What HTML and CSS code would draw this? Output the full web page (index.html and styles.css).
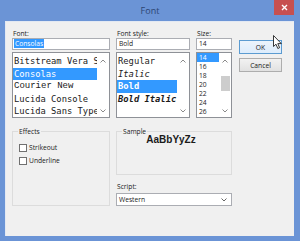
FILE: index.html
```html
<!DOCTYPE html>
<html lang="en">
<head>
    <meta charset="UTF-8">
    <title>Font</title>
    <link rel="stylesheet" href="styles.css">
</head>
<body>
    <div class="window">
        <div class="titlebar">
            <span></span>
            <span class="title">Font</span>
            <span class="close">
                <svg width="7" height="7" viewBox="0 0 7 7"><path d="M1 1L6 6M6 1L1 6" stroke="#fff" stroke-width="1.4"/></svg>
            </span>
        </div>

        <div class="client">
            <div class="top">
                <!-- Font name -->
                <div class="col">
                    <label class="lbl">Font:</label>
                    <div class="edit"><span class="sel">Consolas</span></div>
                    <div class="list">
                        <ul class="items mono">
                            <li class="f-vera">Bitstream Vera Sans Mono</li>
                            <li class="active">Consolas</li>
                            <li class="f-courier">Courier New</li>
                            <li>Lucida Console</li>
                            <li>Lucida Sans Typewriter</li>
                        </ul>
                        <div class="vscroll">
                            <svg class="arrow" width="6" height="4" viewBox="0 0 6 4"><path d="M0.5 3.5L3 1L5.5 3.5" fill="none" stroke="#8a8a8a"/></svg>
                            <svg class="arrow" width="6" height="4" viewBox="0 0 6 4"><path d="M0.5 0.5L3 3L5.5 0.5" fill="none" stroke="#8a8a8a"/></svg>
                        </div>
                    </div>
                </div>

                <!-- Font style -->
                <div class="col">
                    <label class="lbl">Font style:</label>
                    <div class="edit">Bold</div>
                    <div class="list">
                        <ul class="items mono">
                            <li>Regular</li>
                            <li class="it">Italic</li>
                            <li class="active bd">Bold</li>
                            <li class="bd it">Bold Italic</li>
                        </ul>
                        <div class="vscroll">
                            <svg class="arrow" width="6" height="4" viewBox="0 0 6 4"><path d="M0.5 3.5L3 1L5.5 3.5" fill="none" stroke="#8a8a8a"/></svg>
                            <svg class="arrow" width="6" height="4" viewBox="0 0 6 4"><path d="M0.5 0.5L3 3L5.5 0.5" fill="none" stroke="#8a8a8a"/></svg>
                        </div>
                    </div>
                </div>

                <!-- Size -->
                <div class="col">
                    <label class="lbl">Size:</label>
                    <div class="edit">14</div>
                    <div class="list">
                        <ul class="items sizes">
                            <li class="active">14</li>
                            <li>16</li>
                            <li>18</li>
                            <li>20</li>
                            <li>22</li>
                            <li>24</li>
                            <li>26</li>
                        </ul>
                        <div class="vscroll">
                            <svg class="arrow" width="6" height="4" viewBox="0 0 6 4"><path d="M0.5 3.5L3 1L5.5 3.5" fill="none" stroke="#8a8a8a"/></svg>
                            <div class="thumb"></div>
                            <svg class="arrow" width="6" height="4" viewBox="0 0 6 4"><path d="M0.5 0.5L3 3L5.5 0.5" fill="none" stroke="#8a8a8a"/></svg>
                        </div>
                    </div>
                </div>

                <div class="buttons">
                    <button class="btn default">OK</button>
                    <button class="btn">Cancel</button>
                    <svg class="cursor" width="10" height="15" viewBox="0 0 10 15">
                        <path d="M0.5 0.5L0.5 11.5L3 9.2L4.8 13.5L6.6 12.7L4.8 8.6L8.3 8.6Z" fill="#fff" stroke="#222" stroke-width="0.9" stroke-linejoin="round"/>
                    </svg>
                </div>
            </div>

            <div class="bottom">
                <fieldset class="group effects">
                    <legend>Effects</legend>
                    <div class="check"><span class="box"></span>Strikeout</div>
                    <div class="check"><span class="box"></span>Underline</div>
                </fieldset>

                <div class="col">
                    <fieldset class="group sample">
                        <legend>Sample</legend>
                        <div class="sample-text">AaBbYyZz</div>
                    </fieldset>
                    <label class="lbl script-lbl">Script:</label>
                    <div class="combo">
                        <span>Western</span>
                        <svg width="6" height="4" viewBox="0 0 6 4"><path d="M0.5 0.5L3 3L5.5 0.5" fill="none" stroke="#666"/></svg>
                    </div>
                </div>
            </div>
        </div>
    </div>
</body>
</html>
```

FILE: styles.css
```css
/* Colours */
:root {
    --frame: #6b94d6;
    --face: #f0f0f0;
    --edit-border: #abadb3;
    --list-border: #8e9197;
    --group-border: #dcdcdc;
    --highlight: #3399ff;
    --text: #1a1a1a;
}

/* General */
body {
    margin: 0;
    font-family: "Open Sans", "Liberation Sans", sans-serif;
    font-size: 6.7px;
    color: var(--text);
}
ul {
    margin: 0;
    padding: 0;
    list-style: none;
}

/* Window frame */
.window {
    width: 300px;
    height: 241px;
    box-sizing: border-box;
    background: var(--frame);
    padding: 0 6px 5px 5px;
    display: flex;
    flex-direction: column;
}
.titlebar {
    height: 21px;
    margin: 0 -6px 0 -5px;
    display: grid;
    grid-template-columns: 1fr auto 1fr;
    align-items: start;
}
.title {
    font-size: 9px;
    line-height: 22px;
    color: #2b4573;
}
.close {
    justify-self: end;
    margin-right: 6px;
    width: 20px;
    height: 15px;
    background: #c75050;
    display: flex;
    align-items: center;
    justify-content: center;
}
.client {
    flex: 1;
    background: var(--face);
    padding: 8px 0 0 7px;
    box-shadow: inset 1px 1px 0 #e3e9f3;
}

/* Top area */
.top {
    display: grid;
    grid-template-columns: 98px 74px 36px 44px;
    column-gap: 6px;
}
.col {
    display: flex;
    flex-direction: column;
}
.lbl {
    height: 9px;
    line-height: 9px;
    padding-left: 1px;
}
.edit {
    height: 12px;
    box-sizing: border-box;
    border: 1px solid var(--edit-border);
    background: #fff;
    line-height: 10px;
    padding-left: 2px;
}
.sel {
    background: var(--highlight);
    color: #fff;
    padding: 0 1px;
    margin-left: -1px;
}
.list {
    margin-top: 2px;
    height: 66px;
    box-sizing: border-box;
    border: 1px solid var(--list-border);
    background: #fff;
    display: flex;
}
.items {
    flex: 1;
    min-width: 0;
    padding-top: 2px;
    overflow: hidden;
}
.items li {
    white-space: nowrap;
    overflow: hidden;
    padding-left: 1px;
}
.items .active {
    background: var(--highlight);
    color: #fff;
}
.mono li {
    font-family: "DejaVu Sans Mono", monospace;
    font-size: 8.8px;
    line-height: 12.5px;
}
.mono .f-courier {
    font-family: "Liberation Mono", monospace;
    font-size: 9px;
}
.mono .it {
    font-style: italic;
}
.mono .bd {
    font-weight: bold;
}
.sizes {
    padding-top: 0;
}
.sizes li {
    line-height: 9px;
    padding-left: 2px;
}
.vscroll {
    width: 12px;
    display: flex;
    flex-direction: column;
    align-items: center;
    justify-content: space-between;
    padding: 6px 0 4px;
}
.thumb {
    width: 9px;
    height: 15px;
    background: #cdcdcd;
    margin-top: -6px;
}

/* Buttons */
.buttons {
    position: relative;
    margin-left: 1px;
    padding-top: 11px;
    display: flex;
    flex-direction: column;
    gap: 4px;
}
.btn {
    height: 14px;
    margin: 0;
    padding: 0;
    border: 1px solid #adadad;
    background: linear-gradient(#f2f2f2, #e1e1e1);
    font-family: inherit;
    font-size: 6.7px;
    color: var(--text);
}
.btn.default {
    border-color: #5b9bd1;
    background: linear-gradient(#ecf4fc, #dcecfc);
}
.cursor {
    position: absolute;
    left: 34px;
    top: 6px;
}

/* Bottom area */
.bottom {
    margin-top: 9px;
    display: grid;
    grid-template-columns: 98px 116px;
    column-gap: 6px;
}
.group {
    margin: 0;
    padding: 0 5px;
    min-width: 0;
    border: 1px solid var(--group-border);
}
.group legend {
    padding: 0 1px;
    line-height: 9px;
}
.effects {
    height: 79px;
    box-sizing: border-box;
    padding-top: 5px;
}
.check {
    height: 13px;
    display: flex;
    align-items: center;
    gap: 2px;
    padding-left: 1px;
}
.box {
    width: 8px;
    height: 8px;
    box-sizing: border-box;
    border: 1px solid #707070;
    background: #fff;
}
.sample {
    height: 48px;
    box-sizing: border-box;
    display: flex;
    align-items: center;
    justify-content: center;
}
.sample-text {
    font-family: "Liberation Sans", sans-serif;
    font-weight: bold;
    font-size: 10px;
    margin-top: -2px;
    margin-right: 6px;
}
.script-lbl {
    margin-top: 7px;
}
.combo {
    margin-top: 2px;
    height: 13px;
    box-sizing: border-box;
    border: 1px solid var(--edit-border);
    background: #fff;
    display: flex;
    align-items: center;
    justify-content: space-between;
    padding: 0 4px 0 2px;
}
```
